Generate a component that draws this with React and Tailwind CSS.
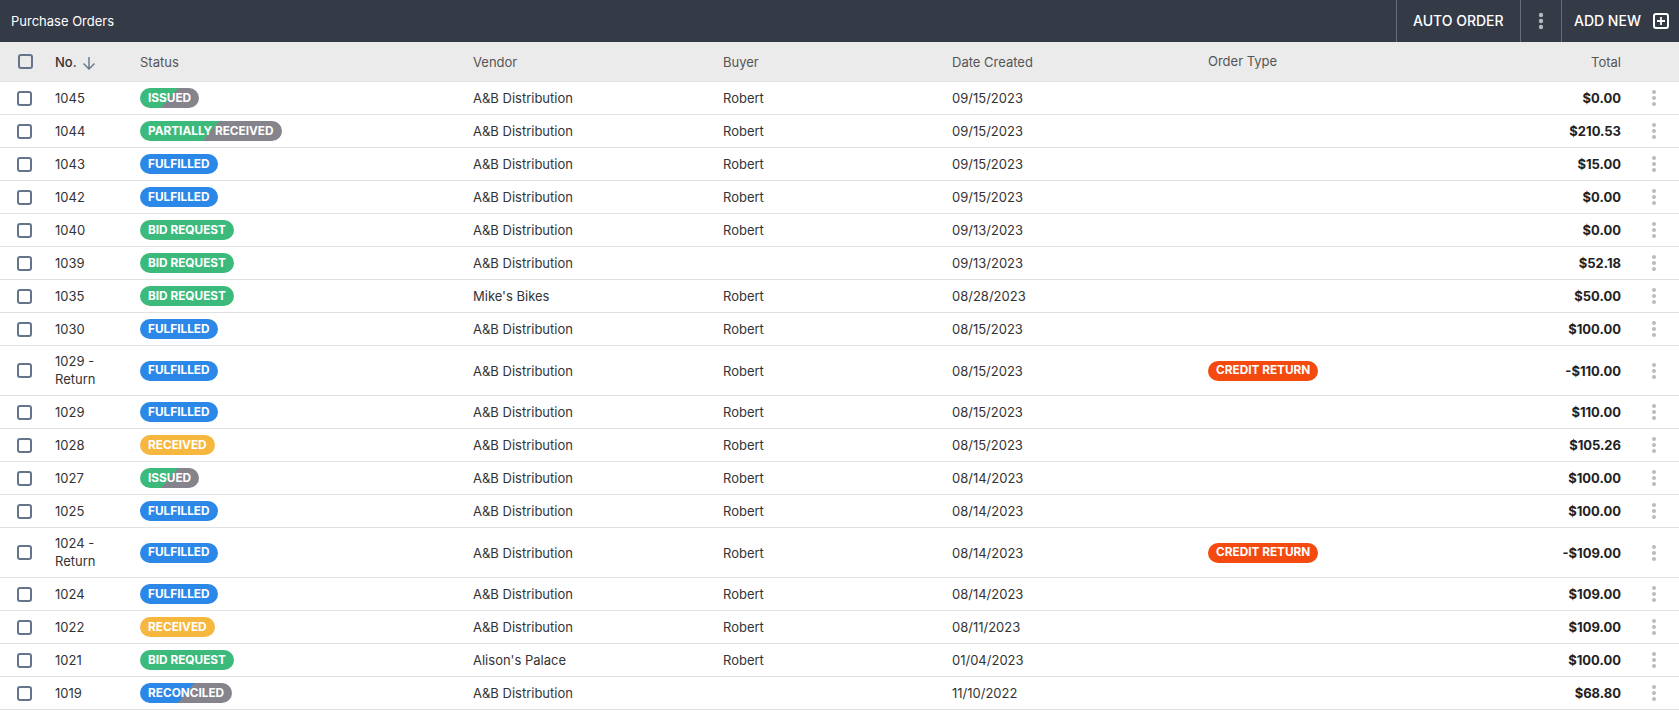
const rows = [
  { no: "1045", status: "issued", vendor: "A&B Distribution", buyer: "Robert", date: "09/15/2023", total: "$0.00" },
  { no: "1044", status: "partial", vendor: "A&B Distribution", buyer: "Robert", date: "09/15/2023", total: "$210.53" },
  { no: "1043", status: "fulfilled", vendor: "A&B Distribution", buyer: "Robert", date: "09/15/2023", total: "$15.00" },
  { no: "1042", status: "fulfilled", vendor: "A&B Distribution", buyer: "Robert", date: "09/15/2023", total: "$0.00" },
  { no: "1040", status: "bid", vendor: "A&B Distribution", buyer: "Robert", date: "09/13/2023", total: "$0.00" },
  { no: "1039", status: "bid", vendor: "A&B Distribution", buyer: "", date: "09/13/2023", total: "$52.18" },
  { no: "1035", status: "bid", vendor: "Mike's Bikes", buyer: "Robert", date: "08/28/2023", total: "$50.00" },
  { no: "1030", status: "fulfilled", vendor: "A&B Distribution", buyer: "Robert", date: "08/15/2023", total: "$100.00" },
  { no: "1029 - Return", status: "fulfilled", vendor: "A&B Distribution", buyer: "Robert", date: "08/15/2023", type: "CREDIT RETURN", total: "-$110.00" },
  { no: "1029", status: "fulfilled", vendor: "A&B Distribution", buyer: "Robert", date: "08/15/2023", total: "$110.00" },
  { no: "1028", status: "received", vendor: "A&B Distribution", buyer: "Robert", date: "08/15/2023", total: "$105.26" },
  { no: "1027", status: "issued", vendor: "A&B Distribution", buyer: "Robert", date: "08/14/2023", total: "$100.00" },
  { no: "1025", status: "fulfilled", vendor: "A&B Distribution", buyer: "Robert", date: "08/14/2023", total: "$100.00" },
  { no: "1024 - Return", status: "fulfilled", vendor: "A&B Distribution", buyer: "Robert", date: "08/14/2023", type: "CREDIT RETURN", total: "-$109.00" },
  { no: "1024", status: "fulfilled", vendor: "A&B Distribution", buyer: "Robert", date: "08/14/2023", total: "$109.00" },
  { no: "1022", status: "received", vendor: "A&B Distribution", buyer: "Robert", date: "08/11/2023", total: "$109.00" },
  { no: "1021", status: "bid", vendor: "Alison's Palace", buyer: "Robert", date: "01/04/2023", total: "$100.00" },
  { no: "1019", status: "reconciled", vendor: "A&B Distribution", buyer: "", date: "11/10/2022", total: "$68.80" },
];

const statuses = {
  issued: { label: "ISSUED", bg: "bg-[linear-gradient(130deg,#3cba7c_50%,#85838c_50%)]" },
  partial: { label: "PARTIALLY RECEIVED", bg: "bg-[linear-gradient(130deg,#3cba7c_50%,#85838c_50%)]" },
  fulfilled: { label: "FULFILLED", bg: "bg-[#2b87e8]" },
  bid: { label: "BID REQUEST", bg: "bg-[#3cba7c]" },
  received: { label: "RECEIVED", bg: "bg-[#f6b73f]" },
  reconciled: { label: "RECONCILED", bg: "bg-[linear-gradient(130deg,#2b87e8_50%,#85838c_50%)]" },
};

const cell = "border-b border-[#e0e0e0] leading-[18px]";

function Badge({ label, bg }) {
  return (
    <span className={`inline-flex items-center h-5 px-2 rounded-full text-[11.8px] font-bold leading-none text-white whitespace-nowrap ${bg}`}>
      {label}
    </span>
  );
}

function Dots({ color, r = 2 }) {
  return (
    <svg width="6" height="18" viewBox="0 0 6 18" className="block" fill={color}>
      <circle cx="3" cy="3" r={r} />
      <circle cx="3" cy="9" r={r} />
      <circle cx="3" cy="15" r={r} />
    </svg>
  );
}

function Check({ className }) {
  return (
    <input
      type="checkbox"
      className={`block appearance-none w-[15px] h-[15px] border-2 border-[#64748b] rounded-[3px] ${className}`}
    />
  );
}

export default function App() {
  return (
    <div className="w-[1679px] h-[710px] overflow-hidden bg-white font-['Inter',sans-serif] text-[13px] text-[#333]">
      {/* Top bar */}
      <div className="flex h-[42px] items-stretch bg-[#343a46] text-white">
        <div className="flex-1 flex items-center pl-[11px] pt-px">Purchase Orders</div>
        <div className="flex items-center w-[124px] pl-[16px] pb-[2px] border-l border-[#666b75] text-[14px] font-medium whitespace-nowrap">
          AUTO ORDER
        </div>
        <div className="flex items-center justify-center w-[41px] border-l border-[#666b75]">
          <Dots color="#b5b7bb" r={2.2} />
        </div>
        <div className="flex items-center w-[118px] pl-[12px] border-l border-[#666b75] text-[14px] font-medium whitespace-nowrap">
          <span className="pb-[2px]">ADD NEW</span>
          <span className="flex items-center justify-center w-4 h-4 ml-[12px] border-2 border-white rounded-[3px]">
            <svg width="10" height="10" viewBox="0 0 10 10" stroke="white" strokeWidth="1.8">
              <path d="M5 1v8M1 5h8" />
            </svg>
          </span>
        </div>
      </div>

      <table className="w-full table-fixed border-separate border-spacing-0">
        <thead>
          <tr className="bg-[#ebebeb] text-left text-[#555]">
            <th className="w-[55px] h-[40px] border-b border-[#e0e0e0] pl-[18px] font-normal">
              <Check className="bg-transparent" />
            </th>
            <th className="w-[85px] pt-[2px] border-b border-[#e0e0e0] font-medium text-[#333]">
              <span className="flex items-center gap-[5px]">
                No.
                <svg width="14" height="14" viewBox="0 0 14 14" fill="none" stroke="#64748b" strokeWidth="1.4">
                  <path d="M7 1v12M1.5 7.5L7 13l5.5-5.5" />
                </svg>
              </span>
            </th>
            <th className="w-[333px] pt-[2px] border-b border-[#e0e0e0] font-normal">Status</th>
            <th className="w-[250px] pt-[2px] border-b border-[#e0e0e0] font-normal">Vendor</th>
            <th className="w-[229px] pt-[2px] border-b border-[#e0e0e0] font-normal">Buyer</th>
            <th className="w-[256px] pt-[2px] border-b border-[#e0e0e0] font-normal">Date Created</th>
            <th className="w-[413px] pt-[2px] border-b border-[#e0e0e0] font-normal">
              <div className="flex justify-between">
                <span className="-mt-px">Order Type</span>
                <span>Total</span>
              </div>
            </th>
            <th className="w-[58px] border-b border-[#e0e0e0]"></th>
          </tr>
        </thead>
        <tbody>
          {rows.map((row, i) => {
            // two line rows sit a pixel lower
            const pad = row.type ? "pt-[7px] pb-[6px]" : "pt-[6px] pb-[7px]";
            return (
              <tr key={i}>
                <td className="h-[33px] border-b border-[#e0e0e0] pl-[17px]">
                  <Check className="bg-white" />
                </td>
                <td className={`${cell} pt-[6px] pb-[7px] pr-[20px]`}>{row.no}</td>
                <td className="border-b border-[#e0e0e0]">
                  <Badge {...statuses[row.status]} />
                </td>
                <td className={`${cell} ${pad}`}>{row.vendor}</td>
                <td className={`${cell} ${pad}`}>{row.buyer}</td>
                <td className={`${cell} ${pad}`}>{row.date}</td>
                <td className={`${cell} ${pad}`}>
                  <div className="flex items-center justify-between">
                    {row.type ? <Badge label={row.type} bg="bg-[#f4490f]" /> : <span />}
                    <span className="font-bold text-[#222]">{row.total}</span>
                  </div>
                </td>
                <td className="border-b border-[#e0e0e0] pl-[30px]">
                  <Dots color="#bbbbbb" />
                </td>
              </tr>
            );
          })}
        </tbody>
      </table>
    </div>
  );
}
